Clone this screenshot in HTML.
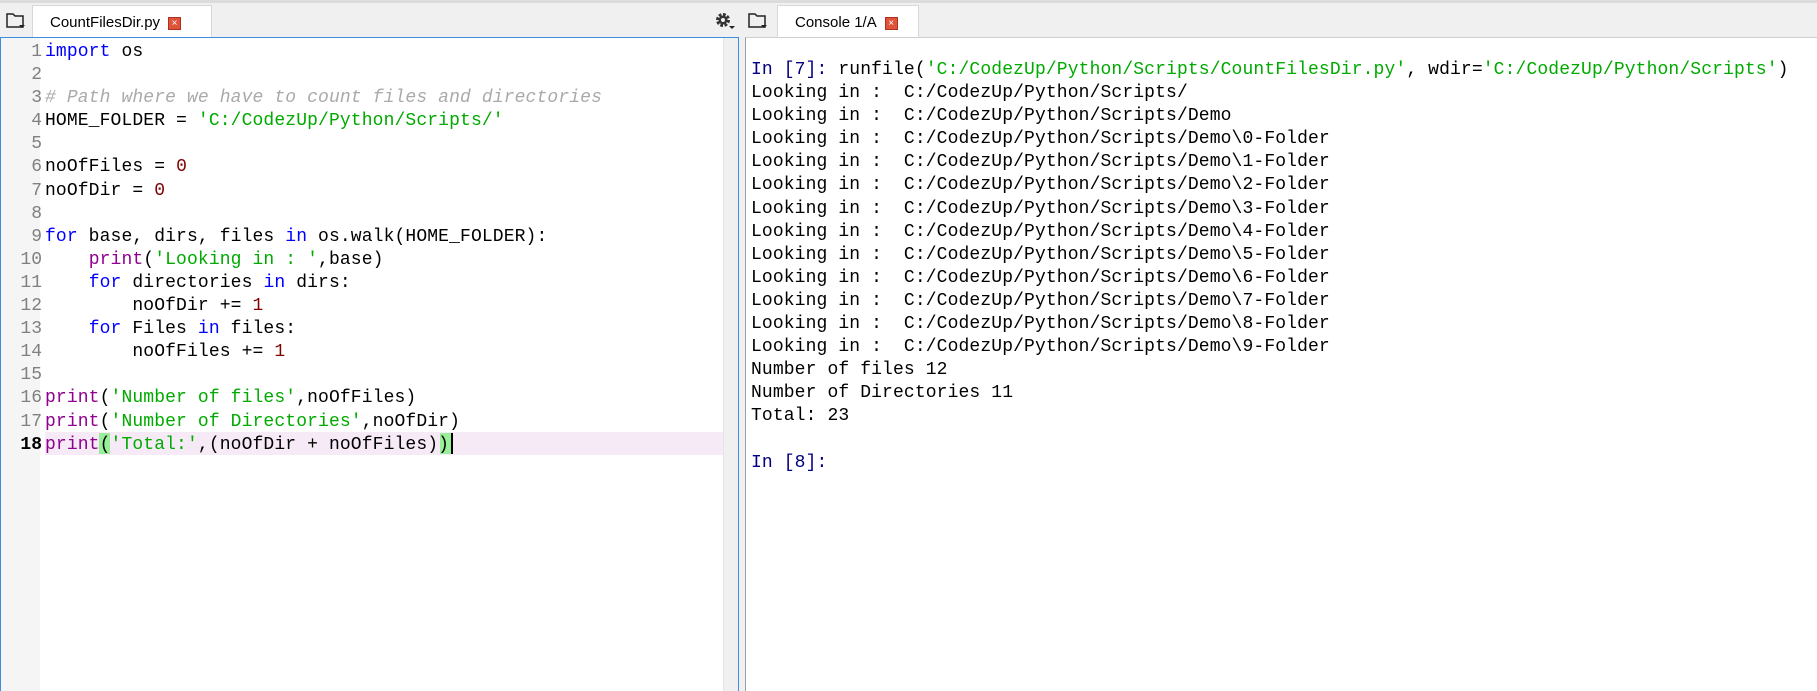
<!DOCTYPE html>
<html><head><meta charset="utf-8"><style>
*{margin:0;padding:0;box-sizing:border-box}
body{width:1817px;height:691px;background:#f0f0f0;position:relative;overflow:hidden;font-family:"Liberation Mono",monospace}
.abs{position:absolute}
.code{font-size:18px;line-height:23.1px;white-space:pre;color:#000;letter-spacing:0.12px}
.k{color:#0000ff}.s{color:#00aa00}.c{color:#aaaaaa;font-style:italic}.p{color:#900090}.n{color:#800000}.b{color:#000080}
.tab{font-family:"Liberation Sans",sans-serif;font-size:15px;background:#fff;border:1px solid #d8d8d8;border-bottom:none}
.x{display:inline-block;width:13px;height:13px;background:#e0533b;border:1px solid #b03020;color:#fff;font-size:10px;line-height:11px;text-align:center;vertical-align:middle;margin-left:8px}
</style></head><body>
<div class="abs" style="left:0;top:0;width:1817px;height:3px;background:#dcdcdc"></div>
<svg class="abs" style="left:6px;top:12px" width="20" height="18" viewBox="0 0 20 18"><path d="M1 2h6l2 2h8v11H1z" fill="none" stroke="#222" stroke-width="1.5"/><path d="M13 13h6l-3 3z" fill="#222"/></svg>
<div class="abs tab" style="left:32px;top:5px;width:180px;height:33px;padding:8px 0 0 17px">CountFilesDir.py<span class="x">×</span></div>
<svg class="abs" style="left:714px;top:11px" width="22" height="20" viewBox="0 0 22 20"><circle cx="9" cy="9" r="5" fill="none" stroke="#333" stroke-width="4" stroke-dasharray="2.5 1.4"/><circle cx="9" cy="9" r="4.5" fill="#333"/><circle cx="9" cy="9" r="2" fill="#f0f0f0"/><path d="M15 15h6l-3 3z" fill="#222"/></svg>
<div class="abs" style="left:0;top:37px;width:739px;height:654px;background:#fff;border:1px solid #3d8ee0;border-bottom:none"></div>
<div class="abs" style="left:1px;top:38px;width:39px;height:653px;background:#f5f5f5"></div>
<div class="abs" style="left:723px;top:38px;width:15px;height:653px;background:#f0f0f0;border-left:1px solid #e4e4e4"></div>
<div class="abs" style="left:45px;top:432px;width:678px;height:23px;background:#f5eaf5"></div>
<div class="abs" style="left:99px;top:433px;width:11px;height:21px;background:#99ee99"></div>
<div class="abs" style="left:440px;top:433px;width:11px;height:21px;background:#99ee99"></div>
<div class="abs" style="left:451px;top:433px;width:2px;height:21px;background:#000"></div>
<div class="abs code" style="left:0;top:41px;width:42px;text-align:right;color:#808080;letter-spacing:0">1
2
3
4
5
6
7
8
9
10
11
12
13
14
15
16
17
<b style="color:#000">18</b></div>
<div class="abs code" style="left:45px;top:41px"><span class="k">import</span> os

<span class="c"># Path where we have to count files and directories</span>
HOME_FOLDER = <span class="s">'C:/CodezUp/Python/Scripts/'</span>

noOfFiles = <span class="n">0</span>
noOfDir = <span class="n">0</span>

<span class="k">for</span> base, dirs, files <span class="k">in</span> os.walk(HOME_FOLDER):
    <span class="p">print</span>(<span class="s">'Looking in : '</span>,base)
    <span class="k">for</span> directories <span class="k">in</span> dirs:
        noOfDir += <span class="n">1</span>
    <span class="k">for</span> Files <span class="k">in</span> files:
        noOfFiles += <span class="n">1</span>

<span class="p">print</span>(<span class="s">'Number of files'</span>,noOfFiles)
<span class="p">print</span>(<span class="s">'Number of Directories'</span>,noOfDir)
<span class="p">print</span>(<span class="s">'Total:'</span>,(noOfDir + noOfFiles))</div>
<svg class="abs" style="left:748px;top:12px" width="20" height="18" viewBox="0 0 20 18"><path d="M1 2h6l2 2h8v11H1z" fill="none" stroke="#222" stroke-width="1.5"/><path d="M13 13h6l-3 3z" fill="#222"/></svg>
<div class="abs tab" style="left:777px;top:5px;width:142px;height:33px;padding:8px 0 0 17px">Console 1/A<span class="x">×</span></div>
<div class="abs" style="left:745px;top:37px;width:1072px;height:654px;background:#fff;border-left:1px solid #a0a0a0;border-top:1px solid #d0d0d0"></div>
<div class="abs code" style="left:751px;top:59px"><span class="b">In [7]:</span> runfile(<span class="s">'C:/CodezUp/Python/Scripts/CountFilesDir.py'</span>, wdir=<span class="s">'C:/CodezUp/Python/Scripts'</span>)
Looking in :  C:/CodezUp/Python/Scripts/
Looking in :  C:/CodezUp/Python/Scripts/Demo
Looking in :  C:/CodezUp/Python/Scripts/Demo\0-Folder
Looking in :  C:/CodezUp/Python/Scripts/Demo\1-Folder
Looking in :  C:/CodezUp/Python/Scripts/Demo\2-Folder
Looking in :  C:/CodezUp/Python/Scripts/Demo\3-Folder
Looking in :  C:/CodezUp/Python/Scripts/Demo\4-Folder
Looking in :  C:/CodezUp/Python/Scripts/Demo\5-Folder
Looking in :  C:/CodezUp/Python/Scripts/Demo\6-Folder
Looking in :  C:/CodezUp/Python/Scripts/Demo\7-Folder
Looking in :  C:/CodezUp/Python/Scripts/Demo\8-Folder
Looking in :  C:/CodezUp/Python/Scripts/Demo\9-Folder
Number of files 12
Number of Directories 11
Total: 23

<span class="b">In [8]:</span></div>
</body></html>
